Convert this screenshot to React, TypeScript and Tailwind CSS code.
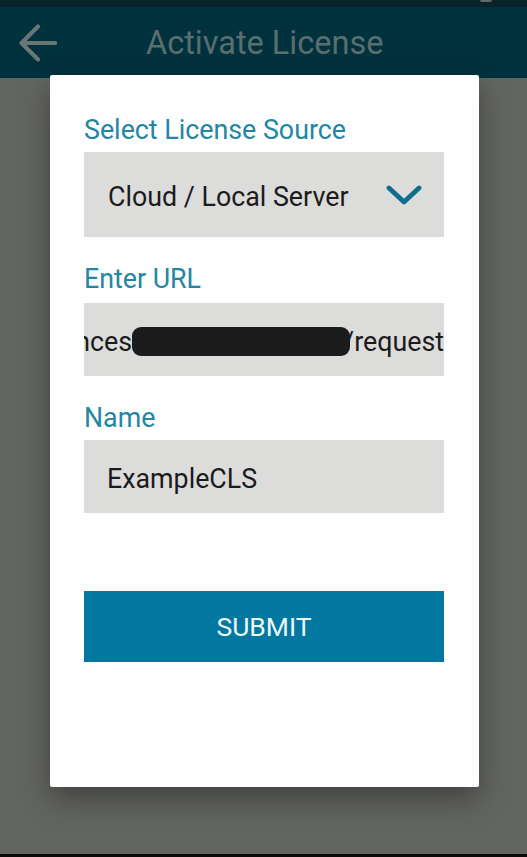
import React from "react";

export default function App() {
  return (
    <div
      className="relative flex h-[857px] w-[527px] flex-col overflow-hidden bg-[#636561]"
      style={{ fontFamily: "Roboto, 'Noto Sans', Arial, sans-serif" }}
    >
      {/* status bar */}
      <div className="relative h-[7px] bg-[#082428]">
        <div className="absolute left-[480px] top-0 h-[2px] w-[12px] rounded-b-full bg-[#5d6a69]" />
      </div>
      {/* header (dimmed by overlay) */}
      <div className="flex h-[71px] items-center bg-[#00323d]">
        <svg
          className="ml-[19px] h-[38px] w-[38px] shrink-0"
          viewBox="0 0 38 38"
          fill="none"
          stroke="#6a7674"
          strokeWidth="4.2"
          strokeLinecap="round"
          strokeLinejoin="round"
        >
          <path d="M36 19H3M19 2.5L2.5 19L19 35.5" />
        </svg>
        <div className="ml-[89px] text-[32.5px] leading-[36px] text-[#5a6d6f]">Activate License</div>
      </div>
      <div className="flex-1" />
      <div className="h-[3px] bg-[#0b0b0b]" />

      {/* dialog overlay */}
      <div className="absolute left-[50px] top-[75px] flex h-[712px] w-[429px] flex-col rounded-[2px] bg-[#fdfefd] pl-[34px] pr-[35px] pt-[40px] shadow-[0_12px_30px_rgba(0,0,0,0.35)]">
        <div className="text-[26.8px] leading-[30px] text-[#2386a2]">Select License Source</div>
        <div className="mt-[7px] flex h-[85px] items-center justify-between bg-[#dcdcdb] pl-[24px] pr-[22px] pt-[4px]">
          <span className="text-[26.8px] leading-[30px] text-[#1b1b1b]">Cloud / Local Server</span>
          <svg
            className="mb-[4px] h-[22px] w-[36px]"
            viewBox="0 0 36 22"
            fill="none"
            stroke="#0f6e8c"
            strokeWidth="4.8"
            strokeLinecap="round"
            strokeLinejoin="round"
          >
            <path d="M3 4L18 18L33 4" />
          </svg>
        </div>

        <div className="mt-[27px] text-[26.8px] leading-[30px] text-[#2386a2]">Enter URL</div>
        <div className="mt-[9px] flex h-[73px] items-center justify-end overflow-hidden bg-[#dcdcdb] pt-[4px]">
          <span className="flex shrink-0 items-center whitespace-nowrap text-[26.8px] leading-[30px] text-[#1b1b1b]">
            <span>https://cloud.instances</span>
            <span className="relative z-10 mr-[-7px] inline-block h-[29px] w-[218px] rounded-[9px] bg-[#1c1c1c]" />
            <span>/request</span>
          </span>
        </div>

        <div className="mt-[27px] text-[26.8px] leading-[30px] text-[#2386a2]">Name</div>
        <div className="mt-[7px] flex h-[73px] items-center bg-[#dcdcdb] pl-[23px] pt-[4px]">
          <span className="text-[26.8px] leading-[30px] text-[#1b1b1b]">ExampleCLS</span>
        </div>

        <button className="mt-[78px] flex h-[71px] items-center justify-center bg-[#0277a0] text-[26.5px] leading-[30px] text-[#eef8fb]">
          SUBMIT
        </button>
      </div>
    </div>
  );
}
